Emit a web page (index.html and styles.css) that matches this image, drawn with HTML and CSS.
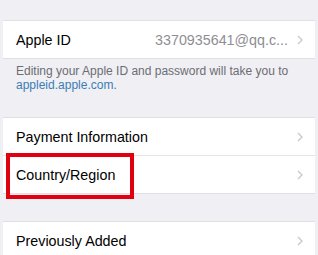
FILE: index.html
```html
<!DOCTYPE html>
<html lang="en">
<head>
    <meta charset="UTF-8">
    <meta name="viewport" content="width=device-width, initial-scale=1.0">
    <title>Apple ID</title>
    <link rel="stylesheet" href="styles.css">
</head>
<body>
    <div class="screen">
        <div class="group">
            <div class="cell">
                <span class="label">Apple ID</span>
                <span class="value">3370935641@qq.c...</span>
                <svg class="chevron" viewBox="0 0 6 10"><path d="M1 1 L5 5 L1 9" /></svg>
            </div>
        </div>
        <p class="footer">
            Editing your Apple ID and password will take you to
            <a href="#">appleid.apple.com</a>.
        </p>

        <div class="group">
            <div class="cell">
                <span class="label">Payment Information</span>
                <svg class="chevron" viewBox="0 0 6 10"><path d="M1 1 L5 5 L1 9" /></svg>
            </div>
            <div class="cell highlighted">
                <span class="label">Country/Region</span>
                <svg class="chevron" viewBox="0 0 6 10"><path d="M1 1 L5 5 L1 9" /></svg>
            </div>
        </div>

        <div class="group spaced">
            <div class="cell">
                <span class="label">Previously Added</span>
                <svg class="chevron" viewBox="0 0 6 10"><path d="M1 1 L5 5 L1 9" /></svg>
            </div>
        </div>
    </div>
</body>
</html>
```

FILE: styles.css
```css
body {
    margin: 0;
    background: #efeff4;
    font-family: "Liberation Sans", Arial, sans-serif;
    color: #000;
}
.screen {
    padding: 20px 3px 0 3px;
}
.group {
    background: white;
    border-top: 1px solid #e0e0e4;
    border-bottom: 1px solid #e0e0e4;
}
.group.spaced {
    margin-top: 27px;
}
.cell {
    position: relative;
    display: flex;
    align-items: center;
    height: 37px;
    padding: 0 12px 0 13px;
    font-size: 14.3px;
}
.cell + .cell {
    border-top: 1px solid #e6e6ea;
}
.label {
    flex: 1;
}
.value {
    color: #8e8e93;
    margin-right: 9px;
}
.chevron {
    width: 6px;
    height: 10px;
    fill: none;
    stroke: #c7c7cc;
    stroke-width: 1.3;
}
.footer {
    margin: 0 0 25px 0;
    padding: 5px 13px 0 13px;
    font-size: 12px;
    line-height: 14px;
    color: #6d6d72;
}
.footer a {
    color: #3b7db3;
    text-decoration: none;
}

/* red annotation box */
.highlighted::after {
    content: "";
    position: absolute;
    left: 3px;
    top: -3px;
    width: 120px;
    height: 38px;
    border: 4px solid #e0000f;
}
```
